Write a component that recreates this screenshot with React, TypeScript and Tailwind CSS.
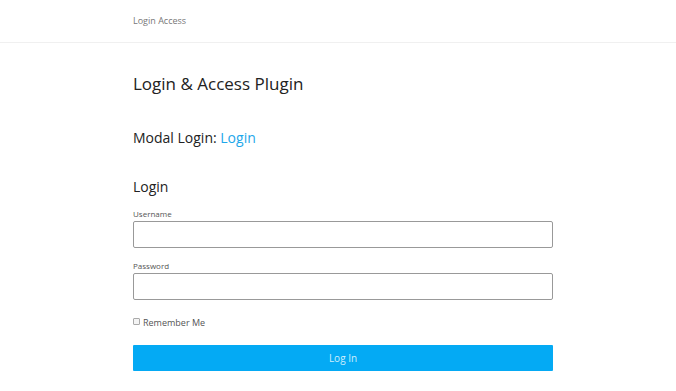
import React from 'react'

export default function App() {
  return (
    <div className="min-h-screen bg-white text-[#333]" style={{ fontFamily: '"Open Sans", sans-serif' }}>
      {/* Header */}
      <header className="h-[43px] border-b border-[#f0f0f0]">
        <div className="w-[420px] ml-[133px] pt-[14px] text-[9px] text-[#777]">Login Access</div>
      </header>

      <main className="w-[420px] ml-[133px]">
        <h1 className="mt-[30px] text-[17px] leading-[22px] text-[#222]">Login &amp; Access Plugin</h1>

        <p className="mt-[33px] text-[14px] leading-[20px] text-[#222]">
          Modal Login: <a href="#" className="text-[#1ea7ea]">Login</a>
        </p>

        <h2 className="mt-[29px] text-[14px] leading-[20px] text-[#222]">Login</h2>

        <form className="mt-[11px] flex flex-col">
          <label className="text-[8px] leading-[11px] text-[#555]">Username</label>
          <input type="text" className="mt-[2px] h-[27px] w-full rounded-[2px] border border-[#999] bg-white" />

          <label className="mt-[12px] text-[8px] leading-[11px] text-[#555]">Password</label>
          <input type="password" className="mt-[2px] h-[27px] w-full rounded-[2px] border border-[#999] bg-white" />

          <label className="mt-[17px] flex items-center gap-[3px] text-[9px] leading-[12px] text-[#555]">
            <input type="checkbox" className="h-[7px] w-[7px] -translate-y-[2px] appearance-none rounded-[1px] border border-[#aaa] bg-[#f4f4f4]" />
            Remember Me
          </label>

          <button type="button" className="mt-[16px] h-[26px] w-full rounded-[1px] bg-[#04aaf4] text-[10px] text-[#cfeefc]">
            Log In
          </button>
        </form>
      </main>
    </div>
  )
}
